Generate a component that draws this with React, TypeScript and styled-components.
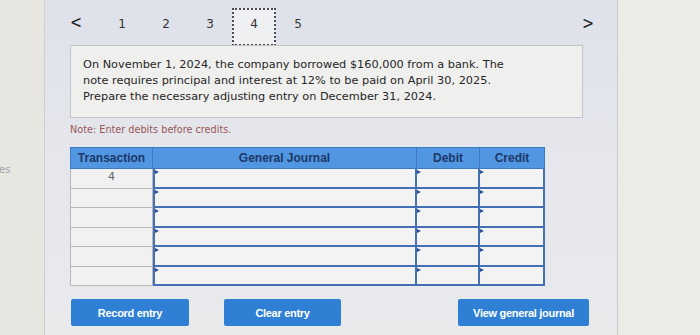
import * as React from 'react';
import styled, { createGlobalStyle } from 'styled-components';

const GlobalStyle = createGlobalStyle`
    html, body {
        margin: 0;
        padding: 0;
        background: #e9e7e1;
    }
    #root {
        width: 700px;
        height: 335px;
        overflow: hidden;
    }
`

const pages = ['1', '2', '3', '4', '5']
const columns = ['Transaction', 'General Journal', 'Debit', 'Credit']
const rows = ['4', '', '', '', '', '']

const App = () => {
    return (
        <Screen>
            <GlobalStyle />
            <LeftStrip>
                <Stray>es</Stray>
            </LeftStrip>
            <Panel>
                <NavRow>
                    <Chevron>&lt;</Chevron>
                    {pages.map((p) => (
                        <PageItem key={p} active={p === '4'}>{p}</PageItem>
                    ))}
                    <ChevronRight>&gt;</ChevronRight>
                </NavRow>
                <Question>
                    On November 1, 2024, the company borrowed $160,000 from a bank. The
                    <br />
                    note requires principal and interest at 12% to be paid on April 30, 2025.
                    <br />
                    Prepare the necessary adjusting entry on December 31, 2024.
                </Question>
                <Note>Note: Enter debits before credits.</Note>
                <Table>
                    {columns.map((c) => (
                        <HeaderCell key={c}>{c}</HeaderCell>
                    ))}
                    {rows.map((r, i) => (
                        <React.Fragment key={i}>
                            <TransCell>{r}</TransCell>
                            <InputCell />
                            <InputCell />
                            <InputCell />
                        </React.Fragment>
                    ))}
                </Table>
                <ButtonRow>
                    <ActionButton width={118}>Record entry</ActionButton>
                    <ActionButton width={117}>Clear entry</ActionButton>
                    <ActionButton width={131} push>View general journal</ActionButton>
                </ButtonRow>
            </Panel>
            <RightStrip />
        </Screen>
    )
}

const Screen = styled.div`
    display: flex;
    width: 700px;
    height: 335px;
    font-family: "DejaVu Sans", Verdana, sans-serif;
`

const LeftStrip = styled.div`
    width: 45px;
    background: #e8e6e0;
    border-right: 1px solid #cfcfd0;
    box-sizing: border-box;
    padding-top: 164px;
`

const Stray = styled.span`
    display: block;
    margin-left: -1px;
    font-size: 10px;
    color: #a2a2a4;
`

const Panel = styled.div`
    width: 573px;
    background: linear-gradient(180deg, #dfe1ea 0%, #e4e6ec 40%, #e9eaec 100%);
    border-right: 1px solid #c9cad0;
    box-sizing: border-box;
    padding-left: 25px;
    display: flex;
    flex-direction: column;
`

const RightStrip = styled.div`
    flex: 1;
    background: #edebe6;
`

const NavRow = styled.div`
    display: flex;
    align-items: flex-start;
    padding-top: 8px;
    width: 527px;
    height: 38px;
`

const Chevron = styled.div`
    width: 30px;
    padding-top: 5px;
    font-size: 18px;
    line-height: 18px;
    color: #222;
    transform: scaleX(0.8);
    transform-origin: left center;
`

const ChevronRight = styled(Chevron)`
    width: auto;
    margin-left: auto;
    padding-top: 6px;
`

const PageItem = styled.div<{ active?: boolean }>`
    width: 44px;
    height: 38px;
    box-sizing: border-box;
    padding-top: 7px;
    text-align: center;
    font-size: 12px;
    color: #333;
    border: 2px dotted ${(p) => (p.active ? '#4a4a55' : 'transparent')};
    background: ${(p) => (p.active ? '#eff0f2' : 'transparent')};
`

const Question = styled.div`
    width: 513px;
    height: 73px;
    box-sizing: border-box;
    margin-top: -1px;
    padding: 11px 12px 0;
    background: #efefee;
    border: 1px solid #c4c5ca;
    font-size: 11.3px;
    line-height: 16px;
    color: #262626;
`

const Note = styled.div`
    margin-top: 6px;
    font-size: 9.7px;
    color: #9a5656;
`

const Table = styled.div`
    margin-top: 12px;
    display: grid;
    grid-template-columns: 83px 264px 63px 65px;
    grid-template-rows: 22px repeat(6, 19.5px);
    width: 475px;
`

const HeaderCell = styled.div`
    background: #5196e0;
    border: 1px solid #3e78c0;
    border-left-width: 0;
    &:first-child {
        border-left-width: 1px;
    }
    font-family: "Liberation Sans", Arial, sans-serif;
    font-weight: bold;
    font-size: 12px;
    color: #1d3768;
    display: flex;
    align-items: center;
    justify-content: center;
    box-sizing: border-box;
`

const TransCell = styled.div`
    background: #f1f1f1;
    border: 1px solid #b8b8ba;
    border-top-width: 0;
    box-sizing: border-box;
    font-size: 11px;
    color: #666;
    text-align: center;
    line-height: 16px;
`

const InputCell = styled.div`
    position: relative;
    background: #f3f3f3;
    border: 2px solid #4370b4;
    border-top-width: 0;
    border-left-width: 0;
    box-sizing: border-box;
    &::before {
        content: '';
        position: absolute;
        left: 0;
        top: 1px;
        border-left: 4px solid #2b4f8f;
        border-top: 2.5px solid transparent;
        border-bottom: 2.5px solid transparent;
    }
    &:nth-child(4n + 2) {
        border-left-width: 2px;
    }
`

const ButtonRow = styled.div`
    display: flex;
    gap: 35px;
    margin-top: 13px;
    width: 518px;
    margin-left: 1px;
`

const ActionButton = styled.button<{ width: number; push?: boolean }>`
    width: ${(p) => p.width}px;
    height: 27px;
    margin-left: ${(p) => (p.push ? 'auto' : '0')};
    background: #2f7fd4;
    border: none;
    border-radius: 2px;
    color: #fff;
    font-family: "Liberation Sans", Arial, sans-serif;
    font-weight: bold;
    font-size: 11px;
    letter-spacing: -0.3px;
    padding: 0;
`

export default App
